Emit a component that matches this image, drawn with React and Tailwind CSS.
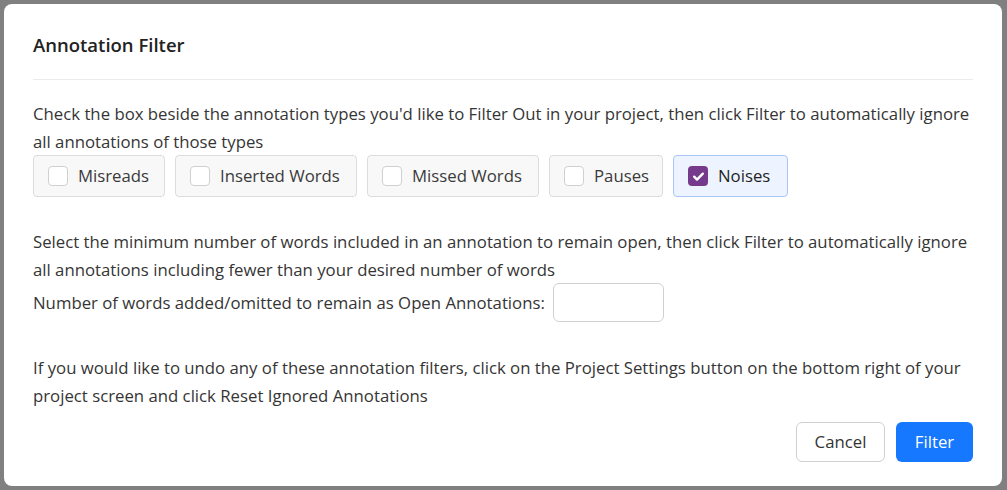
import React, { useState } from "react";

const types = [
  { label: "Misreads", w: "w-[132px]" },
  { label: "Inserted Words", w: "w-[182px]" },
  { label: "Missed Words", w: "w-[172px]" },
  { label: "Pauses", w: "w-[114px]" },
  { label: "Noises", w: "w-[115px]" },
];

const TypeBox = ({ label, width, checked, onToggle }) => (
  <button
    type="button"
    onClick={onToggle}
    className={`flex items-center gap-[10px] h-[42px] pl-[14px] rounded-[4px] border text-[16.75px] ${width} ${
      checked
        ? "bg-[#eef4ff] border-[#a9c6f7] text-[#1f1f1f]"
        : "bg-[#f8f8f8] border-[#dcdcdc] text-[#3a3a3a]"
    }`}
  >
    {checked ? (
      <span className="w-[20px] h-[20px] rounded-[4px] bg-[#763a8d] flex items-center justify-center">
        <svg width="13" height="13" viewBox="0 0 12 12" fill="none">
          <path d="M2 6.2l2.6 2.6L10 3.4" stroke="white" strokeWidth="2.2" strokeLinecap="round" strokeLinejoin="round" />
        </svg>
      </span>
    ) : (
      <span className="w-[20px] h-[20px] rounded-[4px] bg-white border border-[#d0d0d0]"></span>
    )}
    <span>{label}</span>
  </button>
);

const App = () => {
  const [checked, setChecked] = useState({ Noises: true });
  return (
    <div
      className="w-[1007px] h-[490px] bg-[#808080] pt-[4px] pl-[4px] overflow-hidden"
      style={{ fontFamily: "'Open Sans', 'Noto Sans', sans-serif" }}
    >
      <div className="w-[998px] h-[482px] bg-white rounded-[8px] pl-[29px] pr-[29px] pt-[29px] flex flex-col text-[#353535]">
        <h2 className="text-[18.5px] leading-[24px] font-semibold text-[#222]">Annotation Filter</h2>
        <div className="mt-[22px] border-t border-[#ebebeb]"></div>

        <p className="mt-[20px] text-[16.75px] leading-[28px]">
          Check the box beside the annotation types you'd like to Filter Out in your project, then click Filter to
          automatically ignore all annotations of those types
        </p>
        <div className="flex gap-[10px] -mt-[1px]">
          {types.map((t) => (
            <TypeBox
              key={t.label}
              label={t.label}
              width={t.w}
              checked={!!checked[t.label]}
              onToggle={() => setChecked({ ...checked, [t.label]: !checked[t.label] })}
            />
          ))}
        </div>

        <p className="mt-[31px] text-[16.75px] leading-[28px]">
          Select the minimum number of words included in an annotation to remain open, then click Filter to
          automatically ignore all annotations including fewer than your desired number of words
        </p>
        <div className="flex items-center gap-[8px] text-[16.75px] -mt-[1px]">
          <span>Number of words added/omitted to remain as Open Annotations:</span>
          <input className="w-[111px] h-[39px] border border-[#d0d0d0] rounded-[6px] px-2 outline-none" />
        </div>

        <p className="mt-[32px] text-[16.75px] leading-[28px]">
          If you would like to undo any of these annotation filters, click on the Project Settings button on the
          bottom right of your project screen and click Reset Ignored Annotations
        </p>

        <div className="mt-[12px] flex justify-end gap-[11px]">
          <button className="w-[89px] h-[40px] rounded-[6px] border border-[#d0d0d0] bg-white text-[16.75px] text-[#333]">
            Cancel
          </button>
          <button className="w-[77px] h-[40px] rounded-[6px] bg-[#1677ff] text-[16.75px] text-white">Filter</button>
        </div>
      </div>
    </div>
  );
};

export default App;
